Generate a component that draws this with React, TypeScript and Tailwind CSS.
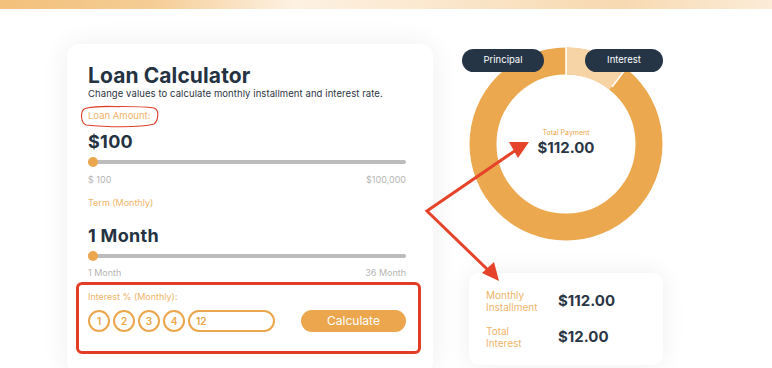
import * as React from "react";

function Slider() {
  return (
    <div className="relative flex h-[10px] items-center">
      <div className="h-[4px] w-full rounded-full bg-[#bcbcbc]" />
      <div className="absolute left-0 h-[10px] w-[10px] rounded-full bg-[#eca64e]" />
    </div>
  );
}

function Donut() {
  // center 100,100 ; ring radius 83, stroke 27
  const r = 83;
  const c = 2 * Math.PI * r;
  const interest = 12 / 112;
  return (
    <svg width="200" height="200" viewBox="0 0 200 200">
      <g transform="rotate(-90 100 100)">
        <circle cx="100" cy="100" r={r} fill="none" stroke="#eba84f" strokeWidth="27" />
        <circle
          cx="100"
          cy="100"
          r={r}
          fill="none"
          stroke="#f6d4a6"
          strokeWidth="27"
          strokeDasharray={`${c * interest} ${c}`}
        />
      </g>
      <line x1="100" y1="2" x2="100" y2="31" stroke="#fff" strokeWidth="1.5" />
      <line x1="146" y1="43" x2="162" y2="22" stroke="#fff" strokeWidth="1.5" />
    </svg>
  );
}

export default function App() {
  return (
    <div className="relative h-[368px] w-[772px] overflow-hidden bg-white font-['Inter',sans-serif]">
      <div className="h-[9px] w-full bg-[linear-gradient(to_right,#f2c07a_0%,#f5cd96_20%,#fdf1e2_38%,#fbe8cf_55%,#f7d9b0_80%,#fcecd8_100%)]" />

      <div className="flex">
        {/* left card */}
        <div className="ml-[67px] mt-[35px] h-[330px] w-[366px] rounded-[12px] bg-white pl-[21px] pr-[27px] pt-[21px] shadow-[0_0_28px_rgba(0,0,0,0.07)]">
          <h1 className="text-[21px] font-bold leading-[22px] tracking-[0.1px] text-[#243242]">Loan Calculator</h1>
          <p className="text-[9.5px] leading-[14px] tracking-[0.08px] text-[#2b3543]">
            Change values to calculate monthly installment and interest rate.
          </p>
          <div className="relative mt-[8px] text-[9.5px] leading-[14px] text-[#efb468]">
            Loan Amount:
            <svg className="absolute left-[-8px] top-[-4px]" width="80" height="24" viewBox="0 0 80 24">
              <path
                d="M6 3 C 24 1, 60 1, 74 3 C 80 5, 78 16, 74 19 C 60 23, 24 22, 6 20 C 1 18, 0 8, 4 4 C 12 1, 30 1, 40 2"
                fill="none"
                stroke="#e0402a"
                strokeWidth="1.1"
              />
            </svg>
          </div>
          <div className="mt-[7px] text-[18px] font-bold leading-[24px] tracking-[0.3px] text-[#243242]">$100</div>
          <div className="mt-[3px]">
            <Slider />
          </div>
          <div className="mt-[6px] flex justify-between text-[9px] leading-[14px] text-[#b5b5b5]">
            <span>$ 100</span>
            <span>$100,000</span>
          </div>
          <div className="mt-[9px] text-[9px] leading-[14px] text-[#efb468]">Term (Monthly)</div>
          <div className="mt-[14px] text-[18px] font-bold leading-[24px] tracking-[0.3px] text-[#243242]">1 Month</div>
          <div className="mt-[3px]">
            <Slider />
          </div>
          <div className="mt-[5px] flex justify-between text-[9px] leading-[14px] text-[#b5b5b5]">
            <span>1 Month</span>
            <span>36 Month</span>
          </div>
          <div className="ml-[-12px] mt-[2px] h-[72px] w-[345px] rounded-[6px] border-[3px] border-[#e23d24] pl-[9px] pr-[12px] pt-[5px]">
            <div className="text-[9px] leading-[14px] text-[#efb468]">Interest % (Monthly):</div>
            <div className="mt-[6px] flex items-center justify-between">
              <div className="flex gap-[3px]">
                {["1", "2", "3", "4"].map((n) => (
                  <div
                    key={n}
                    className="flex h-[22px] w-[22px] items-center justify-center rounded-full border-2 border-[#eca64e] text-[10px] font-semibold text-[#e9a445]"
                  >
                    {n}
                  </div>
                ))}
                <div className="flex h-[22px] w-[87px] items-center rounded-full border-2 border-[#eca64e] pl-[6px] text-[10px] font-semibold text-[#e9a445]">
                  12
                </div>
              </div>
              <button className="h-[22px] w-[105px] rounded-full bg-[#eca64e] text-[12px] leading-[22px] text-white">
                Calculate
              </button>
            </div>
          </div>
        </div>

        {/* right column */}
        <div className="ml-[29px] mt-[35px] w-[202px]">
          <div className="relative h-[200px] w-[202px]">
            <div className="absolute left-[4px] top-0">
              <Donut />
            </div>
            <div className="absolute left-0 top-[5px] flex h-[23px] w-[82px] items-center justify-center rounded-full bg-[#253545] text-[9.5px] text-white">
              Principal
            </div>
            <div className="absolute left-[123px] top-[5px] flex h-[23px] w-[78px] items-center justify-center rounded-full bg-[#253545] text-[9.5px] text-white">
              Interest
            </div>
            <div className="absolute left-[4px] top-[84px] flex w-[200px] flex-col items-center">
              <span className="text-[7px] leading-[10px] text-[#eca64e]">Total Payment</span>
              <span className="mt-[1px] text-[15px] font-bold leading-[18px] text-[#2b3645]">$112.00</span>
            </div>
          </div>
          <div className="ml-[7px] mt-[29px] h-[92px] w-[194px] rounded-[10px] bg-white pl-[17px] pt-[16px] shadow-[0_0_24px_rgba(0,0,0,0.07)]">
            <div className="flex items-center">
              <div className="w-[72px] text-[10px] leading-[12px] text-[#eeb56a]">
                Monthly
                <br />
                Installment
              </div>
              <div className="text-[15px] font-bold text-[#2b3645]">$112.00</div>
            </div>
            <div className="mt-[12px] flex items-center">
              <div className="w-[72px] text-[10px] leading-[12px] text-[#eeb56a]">
                Total
                <br />
                Interest
              </div>
              <div className="text-[15px] font-bold text-[#2b3645]">$12.00</div>
            </div>
          </div>
        </div>
      </div>

      {/* annotation arrows */}
      <svg className="pointer-events-none absolute left-0 top-0" width="772" height="368" viewBox="0 0 772 368">
        <polyline points="516,150 427,211 488,270" fill="none" stroke="#e5432a" strokeWidth="3" strokeLinejoin="miter" />
        <polygon points="529,142 509,142 518,158" fill="#e5432a" />
        <polygon points="499,281 482,273 494,262" fill="#e5432a" />
      </svg>
    </div>
  );
}
